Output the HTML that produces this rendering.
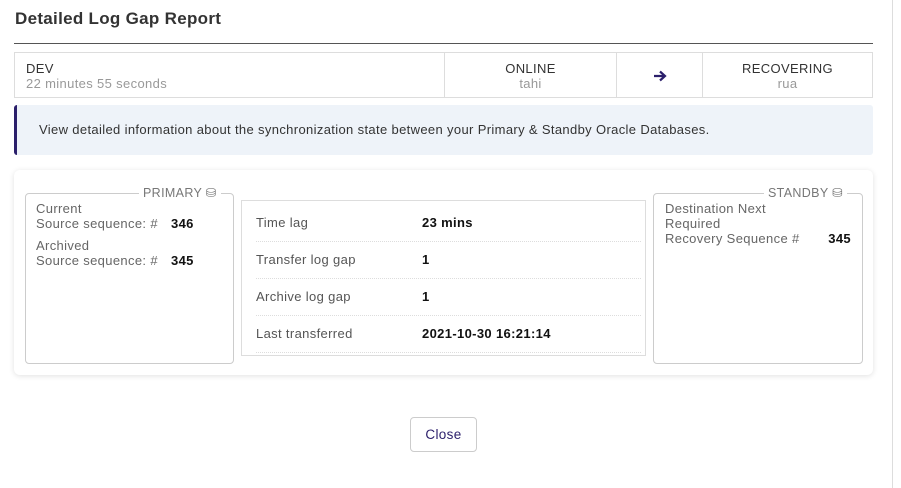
<!DOCTYPE html>
<html><head><style>
body{margin:0;width:901px;height:488px;background:#fff;font-family:"Liberation Sans",sans-serif;position:relative;overflow:hidden;color:#444;letter-spacing:.35px}
.a{position:absolute}
.vline{left:892px;top:0;width:1px;height:488px;background:#ddd}
h1{position:absolute;left:15px;top:9px;margin:0;font-size:17px;font-weight:bold;color:#333;letter-spacing:.3px}
.hr{left:14px;top:43px;width:859px;height:1px;background:#555}
.info{left:14px;top:52px;width:857px;height:44px;border:1px solid #ddd}
.cell{position:absolute;top:0;height:44px;font-size:13px;color:#333}
.cell .s{color:#999}
.alert{left:14px;top:105px;width:859px;height:50px;background:#eef3f9;border-radius:3px}
.alert:before{content:"";position:absolute;left:0;top:0;width:3px;height:50px;background:#2b1f6b;border-radius:3px 0 0 3px}
.card{left:14px;top:170px;width:859px;height:205px;border-radius:6px;box-shadow:0 1px 6px rgba(0,0,0,.12);background:#fff}
.fs{position:absolute;border:1px solid #ccc;border-radius:4px;font-size:13px;color:#666;line-height:15px}
.leg{position:absolute;top:-8px;background:#fff;padding:0 4px;font-size:12.5px;color:#777;line-height:15px}
b{color:#111}
.tbl{left:241px;top:200px;width:403px;height:154px;border:1px solid #ddd}
.row{position:absolute;left:14px;width:385px;height:37px;border-bottom:1px dotted #ddd;font-size:13px;color:#555;line-height:37px}
.row b{position:absolute;left:166px;font-size:13px}
.btn{left:410px;top:417px;width:65px;height:33px;border:1px solid #ccc;border-radius:4px;font-size:13.5px;color:#2b1f6b;text-align:center;line-height:33px}
</style></head><body>
<div class="a vline"></div>
<h1>Detailed Log Gap Report</h1>
<div class="a hr"></div>
<div class="a info">
 <div class="cell" style="left:11px;top:8px;line-height:15px">DEV<br><span class="s">22 minutes 55 seconds</span></div>
 <div class="cell" style="left:429px;width:171px;border-left:1px solid #ddd;text-align:center;padding-top:8px;height:36px;line-height:15px">ONLINE<br><span class="s">tahi</span></div>
 <div class="cell" style="left:601px;width:85px;border-left:1px solid #ddd;border-right:1px solid #ddd;text-align:center;line-height:44px;color:#2b1f6b">
  <svg width="14" height="12" viewBox="0 0 14 12" style="vertical-align:middle"><path d="M1 6H12M7 1.5L12 6L7 10.5" fill="none" stroke="#2b1f6b" stroke-width="2.2"/></svg></div>
 <div class="cell" style="left:687px;width:171px;text-align:center;padding-top:8px;height:36px;line-height:15px">RECOVERING<br><span class="s">rua</span></div>
</div>
<div class="a alert"><div style="position:absolute;left:25px;top:17px;font-size:13px;color:#333;white-space:nowrap">View detailed information about the synchronization state between your Primary &amp; Standby Oracle Databases.</div></div>
<div class="a card"></div>
<div class="fs" style="left:25px;top:193px;width:207px;height:169px">
 <div class="leg" style="left:113px">PRIMARY &#9921;</div>
 <div style="position:absolute;left:10px;top:7px">Current<br>Source sequence: #<b style="position:absolute;left:135px">346</b></div>
 <div style="position:absolute;left:10px;top:44px">Archived<br>Source sequence: #<b style="position:absolute;left:135px">345</b></div>
</div>
<div class="a tbl">
 <div class="row" style="top:3px">Time lag<b>23 mins</b></div>
 <div class="row" style="top:40px">Transfer log gap<b>1</b></div>
 <div class="row" style="top:77px">Archive log gap<b>1</b></div>
 <div class="row" style="top:114px">Last transferred<b>2021-10-30 16:21:14</b></div>
</div>
<div class="fs" style="left:653px;top:193px;width:208px;height:169px">
 <div class="leg" style="left:110px">STANDBY &#9921;</div>
 <div style="position:absolute;left:11px;top:7px;width:186px">Destination Next<br>Required<br>Recovery Sequence #<b style="position:absolute;right:0">345</b></div>
</div>
<div class="a btn">Close</div>
</body></html>
